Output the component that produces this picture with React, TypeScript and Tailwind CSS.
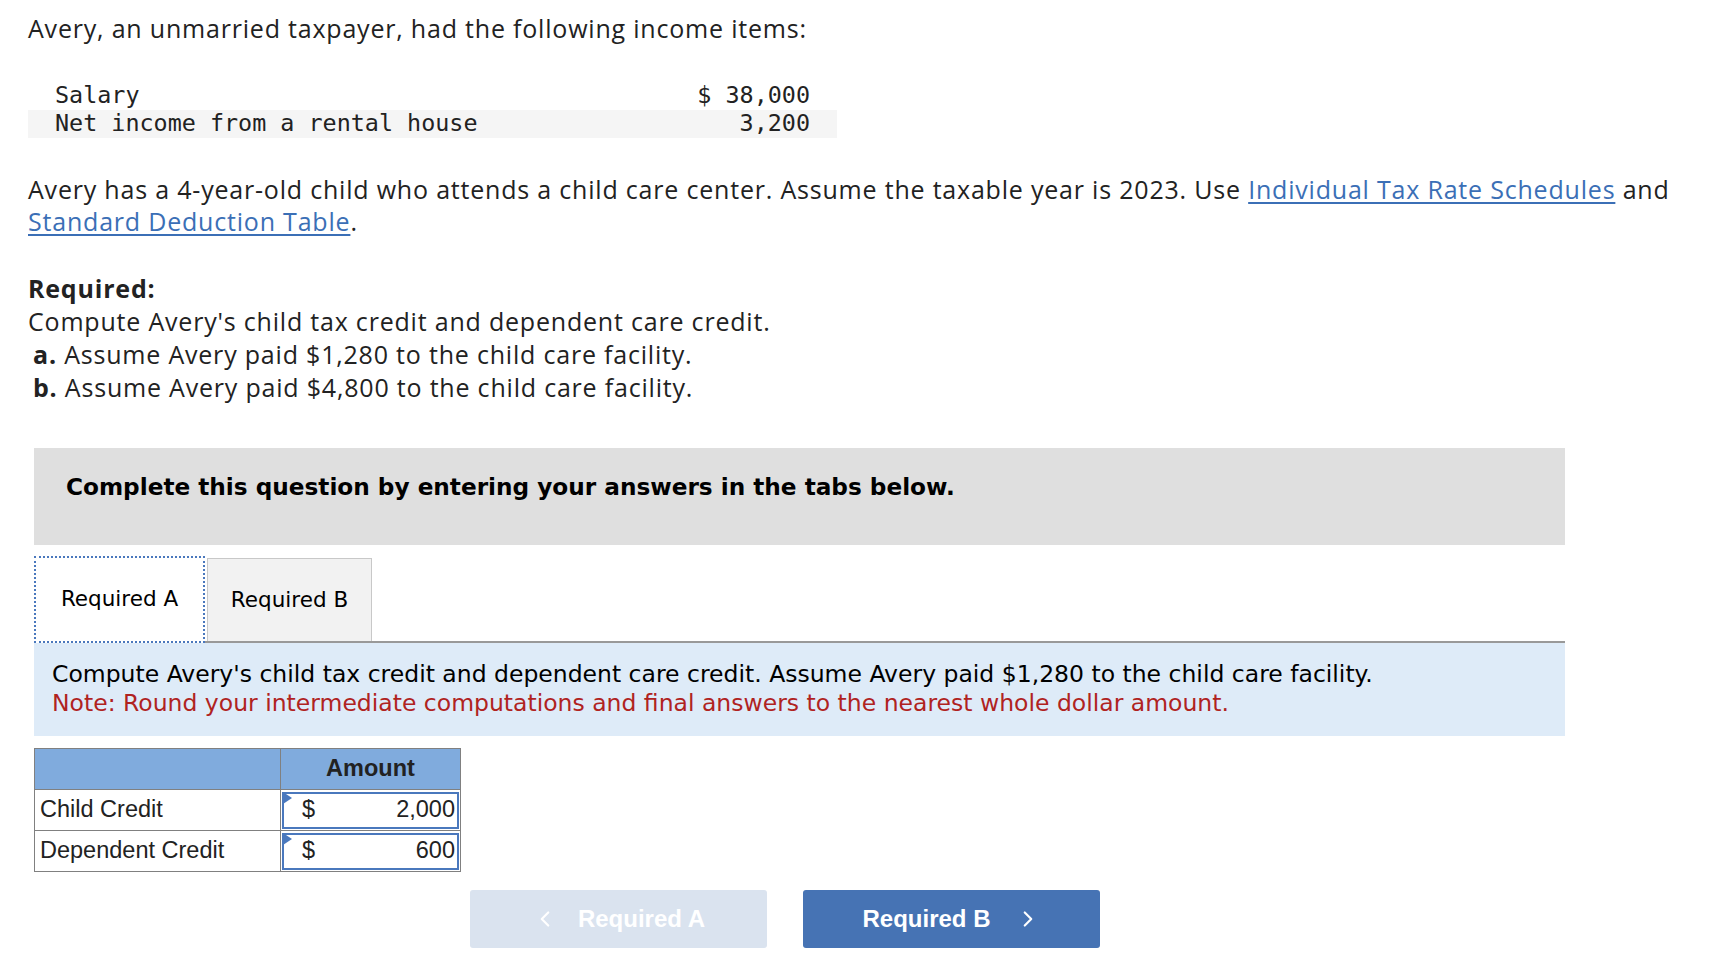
import { ChevronLeft, ChevronRight } from "lucide-react";

const sans = "font-['Open_Sans','Lato',sans-serif] tracking-[0.8px]";
const verdana = "font-['DejaVu_Sans','Verdana',sans-serif]";
const arial = "font-['Liberation_Sans','Arial',sans-serif]";

function IncomeTable() {
  const rows = [
    { label: "Salary", value: "$ 38,000", shaded: false },
    { label: "Net income from a rental house", value: "3,200", shaded: true },
  ];
  return (
    <div className="mt-[37px] w-[809px] font-['DejaVu_Sans_Mono',monospace] text-[23.4px] text-[#222]">
      {rows.map((r) => (
        <div
          key={r.label}
          className={`flex h-[28.5px] items-center justify-between pl-[27px] pr-[27px] ${r.shaded ? "bg-[#f5f5f5]" : ""}`}
        >
          <span>{r.label}</span>
          <span>{r.value}</span>
        </div>
      ))}
    </div>
  );
}

function AmountCell({ value }: { value: string }) {
  return (
    <td className="relative border border-[#808080] p-0">
      <div className="m-[1px] flex h-[37px] items-center justify-between border-2 border-[#4a78bd] pl-[18px] pr-[2px]">
        <span>$</span>
        <span>{value}</span>
      </div>
      <span className="absolute left-[2px] top-[2px] h-0 w-0 border-y-[6px] border-l-[9px] border-y-transparent border-l-[#4a78bd]" />
    </td>
  );
}

export default function App() {
  return (
    <div className="min-h-screen bg-white pb-6 pl-[28px] pr-[2px] pt-[12px] text-[#222]">
      <p className={`${sans} text-[25px] leading-[32px]`}>
        Avery, an unmarried taxpayer, had the following income items:
      </p>

      <IncomeTable />

      <p className={`${sans} mt-[35px] text-[25px] leading-[32px]`}>
        Avery has a 4-year-old child who attends a child care center. Assume the taxable year is 2023. Use{" "}
        <a className="whitespace-nowrap text-[#3b6fb6] underline underline-offset-[3px]">Individual Tax Rate Schedules</a> and{" "}
        <a className="whitespace-nowrap text-[#3b6fb6] underline underline-offset-[3px]">Standard Deduction Table</a>.
      </p>

      <div className={`${sans} mt-[35px] text-[25px] leading-[33px]`}>
        <p className="font-bold">Required:</p>
        <p>Compute Avery's child tax credit and dependent care credit.</p>
        <p className="pl-[5px]">
          <b>a.</b> Assume Avery paid $1,280 to the child care facility.
        </p>
        <p className="pl-[5px]">
          <b>b.</b> Assume Avery paid $4,800 to the child care facility.
        </p>
      </div>

      <div className="ml-[6px] mt-[44px] w-[1531px]">
        <div className={`${verdana} h-[97px] bg-[#dfdfdf] pl-[32px] pt-[24px] text-[23.2px] font-bold leading-[30px] text-black`}>
          Complete this question by entering your answers in the tabs below.
        </div>

        <div className={`${verdana} mt-[11px] flex items-end border-b-2 border-[#999] text-[21.5px] text-black`}>
          <div className="-mb-[2px] flex h-[87px] w-[171px] items-center justify-center border-2 border-dotted border-[#4a78bd] bg-white">
            Required A
          </div>
          <div className="ml-[2px] flex h-[83px] w-[165px] items-center justify-center border border-b-0 border-[#c8c8c8] bg-[#f2f2f2]">
            Required B
          </div>
        </div>

        <div className={`${verdana} h-[93px] bg-[#deebf8] pl-[18px] pt-[17px] text-[23.5px] leading-[29px]`}>
          <p className="text-black">
            Compute Avery's child tax credit and dependent care credit. Assume Avery paid $1,280 to the child care facility.
          </p>
          <p className="text-[#b0231f]">
            Note: Round your intermediate computations and final answers to the nearest whole dollar amount.
          </p>
        </div>

        <table className={`${arial} mt-[12px] border-collapse text-[23.5px] text-[#222]`}>
          <thead>
            <tr className="h-[41px] bg-[#80abdd]">
              <th className="w-[246px] border border-[#808080]" />
              <th className="w-[180px] border border-[#808080] font-bold">Amount</th>
            </tr>
          </thead>
          <tbody>
            <tr>
              <td className="h-[41px] border border-[#808080] pl-[5px]">Child Credit</td>
              <AmountCell value="2,000" />
            </tr>
            <tr>
              <td className="h-[41px] border border-[#808080] pl-[5px]">Dependent Credit</td>
              <AmountCell value="600" />
            </tr>
          </tbody>
        </table>
      </div>

      <div className={`${arial} ml-[442px] mt-[18px] flex gap-[36px] text-[24px] font-bold text-white`}>
        <button className="flex h-[58px] w-[297px] items-center justify-center gap-[20px] rounded-[3px] bg-[#dae3ef]">
          <ChevronLeft className="h-[26px] w-[26px]" strokeWidth={2} />
          <span>Required A</span>
        </button>
        <button className="flex h-[58px] w-[297px] items-center justify-center gap-[24px] rounded-[3px] bg-[#4673b4]">
          <span>Required B</span>
          <ChevronRight className="h-[26px] w-[26px]" strokeWidth={2} />
        </button>
      </div>
    </div>
  );
}
